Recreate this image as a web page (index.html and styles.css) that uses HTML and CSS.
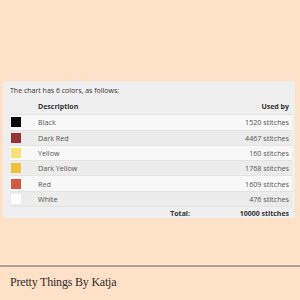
FILE: index.html
```html
<!DOCTYPE html>
<html>
<head>
<meta charset="utf-8">
<link rel="stylesheet" href="styles.css">
</head>
<body>
<div class="page">
  <div class="panel">
    <p class="intro">The chart has 6 colors, as follows:</p>
    <table class="colors">
      <thead>
        <tr><th class="sw"></th><th class="desc">Description</th><th class="used">Used by</th></tr>
      </thead>
      <tbody>
        <tr class="odd"><td class="sw"><span class="swatch" style="background:#050505"></span></td><td class="desc">Black</td><td class="used">1520 stitches</td></tr>
        <tr class="even"><td class="sw"><span class="swatch" style="background:#9b3335"></span></td><td class="desc">Dark Red</td><td class="used">4467 stitches</td></tr>
        <tr class="odd"><td class="sw"><span class="swatch" style="background:#f8e27a"></span></td><td class="desc">Yellow</td><td class="used">160 stitches</td></tr>
        <tr class="even"><td class="sw"><span class="swatch" style="background:#eec03c"></span></td><td class="desc">Dark Yellow</td><td class="used">1768 stitches</td></tr>
        <tr class="odd"><td class="sw"><span class="swatch" style="background:#d05a43"></span></td><td class="desc">Red</td><td class="used">1609 stitches</td></tr>
        <tr class="even"><td class="sw"><span class="swatch" style="background:#ffffff"></span></td><td class="desc">White</td><td class="used">476 stitches</td></tr>
      </tbody>
      <tfoot>
        <tr><td class="sw"></td><td class="total-label">Total:</td><td class="used total">10000 stitches</td></tr>
      </tfoot>
    </table>
  </div>
  <div class="rule"></div>
  <div class="brand">Pretty Things By Katja</div>
</div>
</body>
</html>
```
FILE: styles.css
```css
html, body {
  margin: 0;
  padding: 0;
  background: #fee1c7;
}
.page {
  width: 300px;
  height: 300px;
  padding-top: 81px;
  box-sizing: border-box;
  font-family: "Open Sans", sans-serif;
}
.panel {
  margin: 0 5px 0 3px;
  background: #efefef;
  padding: 4px 3px 4px 7px;
  height: 137px;
  box-sizing: border-box;
}
.intro {
  margin: 0;
  font-size: 7px;
  line-height: 12px;
  color: #333;
}
.colors {
  width: 100%;
  border-collapse: collapse;
  table-layout: fixed;
  font-size: 7.2px;
  color: #555;
  margin-top: 3px;
}
.colors th, .colors td {
  padding: 0;
  height: 14.3px;
  line-height: 8px;
  vertical-align: middle;
  white-space: nowrap;
}
.colors th {
  font-weight: 700;
  font-size: 7px;
  color: #333;
  text-align: left;
}
.colors .used {
  width: 90px;
  text-align: right !important;
  padding-right: 3px;
}
.colors .sw {
  width: 27px;
  padding-left: 1px;
}
.swatch {
  display: block;
  width: 10px;
  height: 10px;
}
.colors tbody tr,
.colors tfoot tr {
  border-top: 1px solid #e3e3e3;
}
.colors tr.odd {
  background: #f8f8f8;
}
.colors tr.even {
  background: #ececec;
}
.colors tfoot td {
  font-weight: 700;
  font-size: 7px;
  color: #333;
}
.colors .total-label {
  text-align: right;
  padding-right: 9px;
}
.rule {
  margin-top: 46px;
  height: 2px;
  background: #b0a088;
  border-top: 1px solid #f5ebe0;
}
.brand {
  font-family: "Liberation Serif", "DejaVu Serif", serif;
  font-size: 12px;
  color: #2e2e2e;
  padding: 8px 0 0 10px;
  letter-spacing: -0.2px;
}
```
